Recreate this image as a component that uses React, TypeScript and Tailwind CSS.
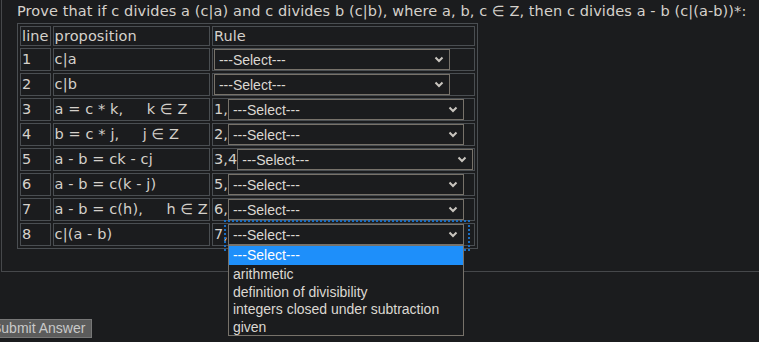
import React from 'react';

const rules = ['arithmetic', 'definition of divisibility', 'integers closed under subtraction', 'given'];

interface Row {
  line: number;
  prop: string;
  refs: string;
}

const rows: Row[] = [
  { line: 1, prop: 'c|a', refs: '' },
  { line: 2, prop: 'c|b', refs: '' },
  { line: 3, prop: 'a = c * k,\u00a0\u00a0\u00a0\u00a0\u00a0k \u2208 Z', refs: '1,' },
  { line: 4, prop: 'b = c * j,\u00a0\u00a0\u00a0\u00a0\u00a0j \u2208 Z', refs: '2,' },
  { line: 5, prop: 'a - b = ck - cj', refs: '3,4' },
  { line: 6, prop: 'a - b = c(k - j)', refs: '5,' },
  { line: 7, prop: 'a - b = c(h),\u00a0\u00a0\u00a0\u00a0\u00a0h \u2208 Z', refs: '6,' },
  { line: 8, prop: 'c|(a - b)', refs: '7,' },
];

function RuleSelect({ open }: { open?: boolean }) {
  return (
    <div className="relative">
      <select
        defaultValue=""
        className="block appearance-none w-[236px] h-[21px] pl-[4px] border border-[#77726a] bg-[#1b1c1e] text-[#dcd8d2] text-[14px] tracking-normal font-['Liberation_Sans'] outline-none"
      >
        <option value="">---Select---</option>
        {rules.map(r => (
          <option key={r} value={r}>{r}</option>
        ))}
      </select>
      <svg
        className="pointer-events-none absolute right-[6px] top-[7px]"
        width="10"
        height="7"
        viewBox="0 0 10 7"
      >
        <path d="M1.5 1.5 L5 5 L8.5 1.5" fill="none" stroke="#c9c5bf" strokeWidth="2" />
      </svg>
      {open && (
        <div className="absolute left-0 top-full z-10 w-[236px] border border-[#77726a] bg-[#1b1c1e] font-['Liberation_Sans'] text-[14px] tracking-normal leading-[18px] text-[#dcd8d2]">
          <div className="bg-[#1e8ffa] pl-[4px] text-white h-[19px]">---Select---</div>
          {rules.map(r => (
            <div key={r} className="pl-[4px] h-[17.5px]">{r}</div>
          ))}
        </div>
      )}
    </div>
  );
}

export default function App() {
  return (
    <div className="h-screen overflow-hidden bg-[#1b1c1e] font-['DejaVu_Sans'] text-[14.5px] tracking-[0.1px] text-[#d5d1cb]">
      <div className="ml-px border-l border-b border-[#46484b] pl-[15px] pt-[2px] pb-[22px]">
        <div className="leading-[19px] whitespace-nowrap">
          Prove that if c divides a (c|a) and c divides b (c|b), where a, b, c &isin; Z, then c divides a - b (c|(a-b))*:
        </div>
        <table className="mt-[2px] border border-[#4a4e52] border-separate border-spacing-[2px]">
          <tbody>
            <tr>
              <td className="border border-[#4a4e52] px-px py-0 leading-[18px]">line</td>
              <td className="border border-[#4a4e52] px-px py-0 leading-[18px]">proposition</td>
              <td className="border border-[#4a4e52] px-px py-0 leading-[18px]">Rule</td>
            </tr>
            {rows.map(row => (
              <tr key={row.line}>
                <td className="border border-[#4a4e52] px-px py-0 leading-[21px] align-middle">{row.line}</td>
                <td className="border border-[#4a4e52] px-px py-0 leading-[21px] align-middle whitespace-nowrap">{row.prop}</td>
                <td className="relative border border-[#4a4e52] px-px py-0 align-middle whitespace-nowrap">
                  <div className="flex items-center h-[21px]">
                    {row.refs && <span>{row.refs}</span>}
                    <RuleSelect open={row.line === 8} />
                  </div>
                  {row.line === 8 && (
                    <div className="pointer-events-none absolute left-[11px] right-[4px] top-[-4px] bottom-[-6px] border-2 border-dotted border-[#1b6fc4]" />
                  )}
                </td>
              </tr>
            ))}
          </tbody>
        </table>
      </div>
      <div className="mt-[46px]">
        <button className="-ml-[15px] h-[19px] px-[6px] bg-[#5c5c5c] border border-[#777] text-[#c9c9c9] font-['Liberation_Sans'] text-[14px] tracking-normal leading-[17px]">
          Submit Answer
        </button>
      </div>
    </div>
  );
}
